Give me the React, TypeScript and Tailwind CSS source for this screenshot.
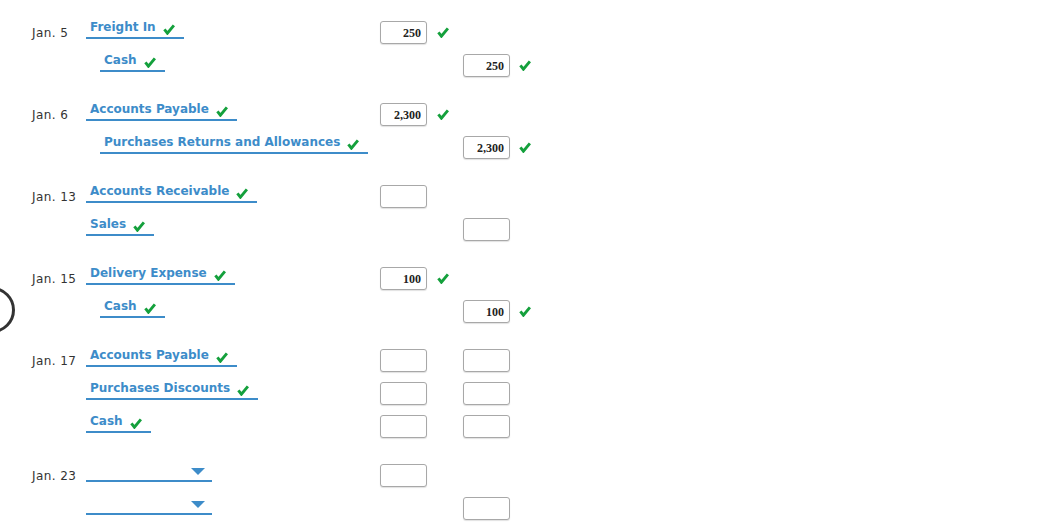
import React from 'react';

const BLUE = 'text-[#3d8cc9]';

interface Amount {
  value?: string;
  check?: boolean;
}

interface RowProps {
  date?: string;
  account?: string;
  indent?: boolean;
  debit?: Amount;
  credit?: Amount;
}

function Check({ className = '' }: { className?: string }) {
  return (
    <svg width="12" height="11" viewBox="0 0 12 11" className={className}>
      <path
        d="M1.4 5.4 L4.4 9.2 L10.9 1.3"
        fill="none"
        stroke="#14a03c"
        strokeWidth="2.9"
        strokeLinecap="butt"
        strokeLinejoin="miter"
      />
    </svg>
  );
}

function Caret() {
  return (
    <svg width="14" height="7" viewBox="0 0 14 7">
      <path d="M0 0 H14 L7 7 Z" fill="#3d8cc9" />
    </svg>
  );
}

function AmountBox({ value }: { value?: string }) {
  return (
    <div className="flex h-[23px] w-[47px] items-center justify-end rounded-[3px] border border-[#a8a8a8] bg-white pr-[5px] shadow-[0_1px_1px_rgba(0,0,0,0.12)] font-['Liberation_Serif',serif] text-[12px] font-bold text-[#222]">
      {value}
    </div>
  );
}

function Row({ date, account, indent, debit, credit }: RowProps) {
  return (
    <div className="flex h-[33px] items-center">
      <div className="w-[54px] text-[12px] leading-[14px] tracking-[0.4px] text-[#333]">{date}</div>
      <div className={`flex w-[294px] items-center ${indent ? 'pl-[14px]' : ''}`}>
        {account ? (
          <div className={`mb-[6px] inline-flex items-end border-b-2 border-[#3d8cc9] pb-[3px] pl-[4px] pr-[9px] text-[12px] font-bold leading-[14px] ${BLUE}`}>
            <span>{account}</span>
            <Check className="ml-[7px] translate-y-[1px]" />
          </div>
        ) : (
          <div className="mb-[6px] flex h-[19px] w-[126px] items-start justify-end border-b-2 border-[#3d8cc9] pr-[7px] pt-[5px]">
            <Caret />
          </div>
        )}
      </div>
      <div className="flex w-[83px] items-center">
        {debit && <AmountBox value={debit.value} />}
        {debit?.check && <Check className="ml-[10px]" />}
      </div>
      <div className="flex items-center">
        {credit && <AmountBox value={credit.value} />}
        {credit?.check && <Check className="ml-[9px]" />}
      </div>
    </div>
  );
}

export default function App() {
  return (
    <div className="relative min-h-screen overflow-hidden bg-white pl-[32px] pt-[16px] font-['DejaVu_Sans',Verdana,sans-serif]">
      <div className="absolute left-[-31px] top-[287px] h-[46px] w-[46px] rounded-full border-[3px] border-[#333]" />

      <div className="flex flex-col gap-[16px]">
        {/* Jan. 5 */}
        <div>
          <Row date="Jan. 5" account="Freight In" debit={{ value: '250', check: true }} />
          <Row account="Cash" indent credit={{ value: '250', check: true }} />
        </div>

        {/* Jan. 6 */}
        <div>
          <Row date="Jan. 6" account="Accounts Payable" debit={{ value: '2,300', check: true }} />
          <Row account="Purchases Returns and Allowances" indent credit={{ value: '2,300', check: true }} />
        </div>

        {/* Jan. 13 */}
        <div>
          <Row date="Jan. 13" account="Accounts Receivable" debit={{}} />
          <Row account="Sales" credit={{}} />
        </div>

        {/* Jan. 15 */}
        <div>
          <Row date="Jan. 15" account="Delivery Expense" debit={{ value: '100', check: true }} />
          <Row account="Cash" indent credit={{ value: '100', check: true }} />
        </div>

        {/* Jan. 17 */}
        <div>
          <Row date="Jan. 17" account="Accounts Payable" debit={{}} credit={{}} />
          <Row account="Purchases Discounts" debit={{}} credit={{}} />
          <Row account="Cash" debit={{}} credit={{}} />
        </div>

        {/* Jan. 23 */}
        <div>
          <Row date="Jan. 23" debit={{}} />
          <Row credit={{}} />
        </div>
      </div>
    </div>
  );
}
